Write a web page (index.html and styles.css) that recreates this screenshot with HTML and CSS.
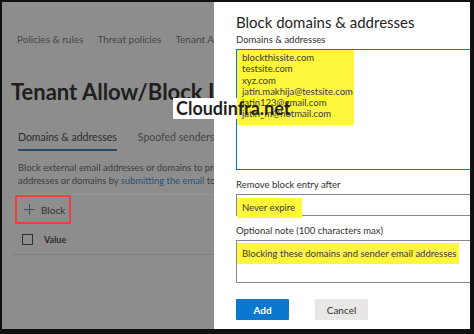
FILE: index.html
```html
<!DOCTYPE html>
<html lang="en">
<head>
    <meta charset="UTF-8">
    <title>Block domains &amp; addresses</title>
    <link rel="stylesheet" href="styles.css">
</head>
<body>
    <div class="frame">
        <section class="page">
            <nav class="breadcrumb">
                <span>Policies &amp; rules</span>
                <svg class="chev" width="5" height="8" viewBox="0 0 5 8"><path d="M1 1l3 3-3 3" fill="none" stroke="#555" stroke-width="0.9"/></svg>
                <span>Threat policies</span>
                <svg class="chev" width="5" height="8" viewBox="0 0 5 8"><path d="M1 1l3 3-3 3" fill="none" stroke="#555" stroke-width="0.9"/></svg>
                <span>Tenant Allow/Block Lists</span>
            </nav>

            <h1 class="title">Tenant Allow/Block Lists</h1>

            <div class="tabs">
                <span class="tab active">Domains &amp; addresses</span>
                <span class="tab">Spoofed senders</span>
            </div>

            <p class="desc">Block external email addresses or domains to prevent<br>addresses or domains by <a href="#">submitting the email</a> to Microsoft</p>

            <div class="toolbar">
                <button class="block-btn">
                    <svg width="11" height="11" viewBox="0 0 11 11"><path d="M5.5 0v11M0 5.5h11" stroke="#3d4f63" stroke-width="1"/></svg>
                    Block
                </button>
            </div>

            <div class="table-head">
                <span class="checkbox"></span>
                <span class="col">Value</span>
            </div>
        </section>

        <aside class="panel">
            <h2 class="panel-title">Block domains &amp; addresses</h2>

            <label class="field-label">Domains &amp; addresses</label>
            <div class="textbox">
                <div class="mark entries">
                    <div>blockthissite.com</div>
                    <div>testsite.com</div>
                    <div>xyz.com</div>
                    <div>jatin.makhija@testsite.com</div>
                    <div>jatin123@gmail.com</div>
                    <div>jatin_m@hotmail.com</div>
                </div>
            </div>

            <label class="field-label">Remove block entry after</label>
            <div class="select">
                <span class="mark">Never expire</span>
            </div>

            <label class="field-label">Optional note (100 characters max)</label>
            <div class="note">
                <span class="mark">Blocking these domains and sender email addresses</span>
            </div>

            <div class="actions">
                <button class="btn primary">Add</button>
                <button class="btn">Cancel</button>
            </div>
        </aside>

        <div class="watermark">Cloudinfra.net</div>
    </div>
</body>
</html>
```

FILE: styles.css
```css
* {
    margin: 0;
    padding: 0;
    box-sizing: border-box;
}

body {
    background-color: #101010;
    font-family: Lato, 'Noto Sans', sans-serif;
    overflow: hidden;
}

.frame {
    position: relative;
    display: flex;
    width: 468px;
    height: 327px;
    margin: 2px 4px 5px 2px;
}

/* dimmed page behind the panel */
.page {
    width: 212px;
    flex-shrink: 0;
    background-color: #8d8d8d;
    overflow: hidden;
    white-space: nowrap;
    color: #3a3a3a;
}

.breadcrumb {
    display: flex;
    align-items: center;
    gap: 7px;
    padding: 30px 0 0 15px;
    font-size: 10px;
    line-height: 14px;
    color: #464646;
}

.title {
    margin: 31px 0 0 9px;
    font-size: 22px;
    font-weight: 700;
    line-height: 30px;
    color: #1e1e1e;
}

.tabs {
    display: flex;
    gap: 21px;
    margin: 23px 0 0 16px;
}

.tab {
    font-size: 10.5px;
    line-height: 14px;
    padding-bottom: 5px;
    color: #454545;
}

.tab.active {
    color: #2c2c2c;
    border-bottom: 2px solid #2f4861;
}

.desc {
    margin: 10px 0 0 16px;
    font-size: 9.4px;
    line-height: 13px;
    color: #3c3c3c;
}

.desc a {
    color: #2b4f74;
    text-decoration: none;
}

.toolbar {
    margin: 7px 0 0 10px;
    border-top: 1px solid #959595;
}

.block-btn {
    display: flex;
    align-items: center;
    gap: 6px;
    width: 56px;
    height: 29px;
    margin-left: 3px;
    padding-left: 7px;
    border: 2px solid #e8423b;
    background: none;
    font-family: inherit;
    font-size: 10px;
    color: #333;
}

.table-head {
    display: flex;
    align-items: center;
    gap: 11px;
    height: 31px;
    margin-left: 10px;
    padding-left: 10px;
    border-bottom: 1px solid #7f7f7f;
}

.checkbox {
    width: 11px;
    height: 11px;
    border: 1px solid #2e2e2e;
}

.col {
    font-size: 9px;
    font-weight: 700;
    color: #2e2e2e;
}

/* side panel */
.panel {
    flex: 1;
    min-width: 0;
    background-color: #ffffff;
    padding: 10px 0 0 22px;
    overflow: hidden;
    white-space: nowrap;
    color: #323130;
}

.panel-title {
    font-size: 15px;
    font-weight: 400;
    line-height: 20px;
    color: #252423;
}

.field-label {
    display: block;
    font-size: 9.5px;
    line-height: 14px;
    margin-top: 1px;
    margin-bottom: 2px;
}

.textbox,
.select,
.note {
    width: 240px;
    border: 1px solid #8a8886;
}

.textbox {
    height: 121px;
    margin: 1px 0 8px;
    border-color: #0b72c8;
}

.mark {
    background-color: #fdf63a;
    font-size: 9.5px;
    color: #3b3a39;
}

.entries {
    width: 117px;
    padding: 2px 0 5px 5px;
    line-height: 11.3px;
}

.select {
    height: 22px;
    margin-bottom: 8px;
}

.select .mark,
.note .mark {
    display: inline-block;
    height: 20px;
    line-height: 20px;
    padding: 0 5px;
}

.select .mark {
    width: 65px;
}

.note {
    height: 43px;
}

.note .mark {
    width: 222px;
    height: 21px;
    line-height: 21px;
}

.actions {
    display: flex;
    gap: 26px;
    margin-top: 16px;
}

.btn {
    width: 53px;
    height: 21px;
    border: none;
    border-radius: 1px;
    background-color: #e8e7e6;
    font-family: inherit;
    font-size: 10px;
    color: #323130;
}

.btn.primary {
    background-color: #0b78d0;
    color: #ffffff;
    font-weight: 700;
}

/* site watermark over the screenshot */
.watermark {
    position: absolute;
    left: 171px;
    top: 96px;
    height: 21px;
    padding-left: 3px;
    font-size: 18px;
    font-weight: 700;
    line-height: 21px;
    color: #1f1f1f;
    background: linear-gradient(to right, #ffffff 64px, transparent 64px);
}
```
